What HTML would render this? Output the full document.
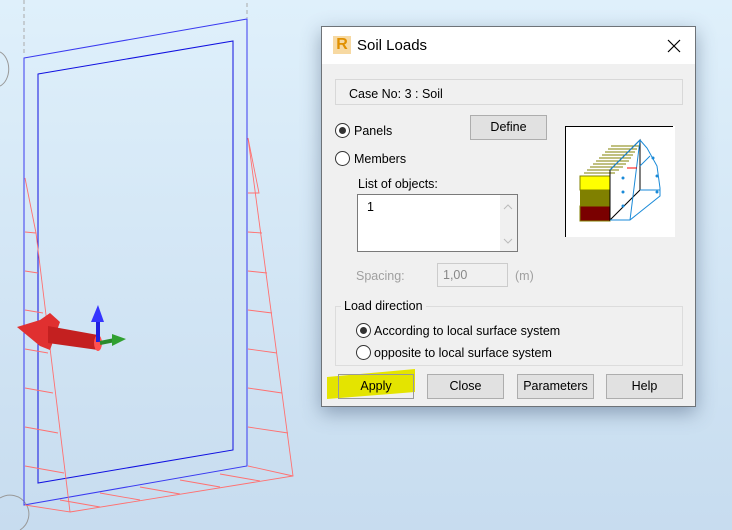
<!DOCTYPE html>
<html><head><meta charset="utf-8"><style>
*{margin:0;padding:0;box-sizing:border-box}
body{width:732px;height:530px;overflow:hidden;position:relative;background:linear-gradient(#dff0fb,#c7dcef);font-family:"Liberation Sans",sans-serif;font-size:12.5px;color:#000}
.a{position:absolute}
#dlg{left:321px;top:26px;width:375px;height:381px;background:#f0f0f0;border:1px solid #6e7378;box-shadow:0 6px 18px rgba(60,80,110,.45)}
#tb{left:0;top:0;width:373px;height:37px;background:#fff}
.btn{position:absolute;height:25px;background:#e1e1e1;border:1px solid #adadad;text-align:center;line-height:23px;font-size:12.5px}
.rad{position:absolute;width:15px;height:15px;border-radius:50%;border:1px solid #333;background:#fff}
.rad.on::after{content:"";position:absolute;left:3px;top:3px;width:7px;height:7px;border-radius:50%;background:#333}
</style></head><body>
<svg class="a" style="left:0;top:0" width="320" height="530">
<line x1="24" y1="0" x2="24" y2="55" stroke="#aaa" stroke-dasharray="4,3"/>
<line x1="247" y1="3" x2="247" y2="18" stroke="#aaa" stroke-dasharray="4,3"/>
<path d="M0 52 A13 18 0 0 1 0 86" fill="none" stroke="#999"/>
<path d="M0 498 A18 18 0 0 1 20 530" fill="none" stroke="#999"/>
<polygon points="24,58 247,19 247,466 24,505" fill="none" stroke="#3a3af0"/>
<polygon points="38,74 233,41 233,450 38,483" fill="none" stroke="#1010e0"/>
<g fill="none" stroke="#ff7070" stroke-width="0.9">
<polyline points="25,178 36,233 70,512 25,505"/>
<polyline points="248,138 293,476 70,512"/>
<polyline points="248,138 259,193 248,193"/>
<line x1="25" y1="232" x2="36" y2="233"/>
<line x1="25" y1="271" x2="38" y2="273"/><line x1="25" y1="310" x2="43" y2="313"/>
<line x1="25" y1="349" x2="48" y2="353"/><line x1="25" y1="388" x2="53" y2="393"/>
<line x1="25" y1="427" x2="58" y2="433"/><line x1="25" y1="466" x2="64" y2="473"/>
<line x1="248" y1="232" x2="262" y2="233"/><line x1="248" y1="271" x2="267" y2="273"/>
<line x1="248" y1="310" x2="272" y2="313"/><line x1="248" y1="349" x2="277" y2="353"/>
<line x1="248" y1="388" x2="282" y2="393"/><line x1="248" y1="427" x2="288" y2="433"/>
<line x1="248" y1="466" x2="293" y2="476"/>
<line x1="60" y1="500" x2="100" y2="507"/><line x1="100" y1="493" x2="140" y2="500"/><line x1="140" y1="487" x2="180" y2="494"/><line x1="180" y1="480" x2="220" y2="487"/><line x1="220" y1="474" x2="260" y2="481"/>
</g>
<polygon points="17,327 40,320 50,313 60,322 50,350 40,346" fill="#e03030"/>
<polygon points="48,326 98,335 98,350 48,343" fill="#c42020"/>
<ellipse cx="98" cy="343" rx="4" ry="8" fill="#ff5050"/>
<rect x="96" y="320" width="4" height="22" fill="#2020e0"/>
<polygon points="91,322 98,305 104,322" fill="#3535ff"/>
<line x1="100" y1="343" x2="115" y2="340" stroke="#2a8a2a" stroke-width="4"/>
<polygon points="112,334 126,339 112,346" fill="#30a030"/>
</svg>
<div id="dlg" class="a">
<div id="tb" class="a">
<div class="a" style="left:11px;top:9px;width:18px;height:18px;background:#f7d9a2;color:#e09000;font-weight:bold;font-size:16px;line-height:18px;text-align:center">R</div>
<div class="a" style="left:35px;top:10px;font-size:15px">Soil Loads</div>
<svg class="a" style="left:345px;top:12px" width="14" height="14"><path d="M1 1L13 13M13 1L1 13" stroke="#000" stroke-width="1.2"/></svg>
</div>
<div class="a" style="left:13px;top:52px;width:348px;height:26px;border:1px solid #d8d8d8;padding:7px 13px">Case No: 3 : Soil</div>
<div class="rad on" style="left:13px;top:96px"></div><div class="a" style="left:32px;top:97px">Panels</div>
<div class="rad" style="left:13px;top:124px"></div><div class="a" style="left:32px;top:125px">Members</div>
<div class="btn" style="left:148px;top:88px;width:77px">Define</div>
<svg class="a" style="left:243px;top:99px" width="110" height="111">
<rect x="0" y="0" width="110" height="111" fill="#fff"/>
<path d="M0.5 111V0.5H108" stroke="#000" fill="none"/>
<g stroke="#808000" stroke-width="1">
<line x1="46" y1="20" x2="74" y2="20"/><line x1="43" y1="23" x2="72" y2="23"/><line x1="40" y1="26" x2="70" y2="26"/><line x1="37" y1="29" x2="68" y2="29"/><line x1="34" y1="32" x2="66" y2="32"/><line x1="31" y1="35" x2="64" y2="35"/><line x1="28" y1="38" x2="61" y2="38"/><line x1="25" y1="41" x2="58" y2="41"/><line x1="22" y1="44" x2="54" y2="44"/><line x1="19" y1="47" x2="50" y2="47"/>
</g>
<rect x="15" y="50" width="30" height="14" fill="#ff0" stroke="#808000"/>
<rect x="15" y="64" width="30" height="16" fill="#808000"/>
<rect x="15" y="80" width="30" height="15" fill="#7a0000" stroke="#808000"/>
<polygon points="45,44 75,14 75,64 45,94" fill="none" stroke="#000"/>
<g fill="none" stroke="#1a8ad8"><polyline points="45,44 75,14 82,22 92,40 95,62 95,70 65,94 45,94"/><polyline points="75,64 95,64"/><line x1="75" y1="14" x2="65" y2="94"/><line x1="85" y1="30" x2="75" y2="40"/></g>
<g fill="#1a8ad8"><circle cx="58" cy="52" r="1.5"/><circle cx="58" cy="66" r="1.5"/><circle cx="58" cy="80" r="1.5"/><circle cx="88" cy="32" r="1.5"/><circle cx="92" cy="50" r="1.5"/><circle cx="92" cy="66" r="1.5"/></g>
<line x1="62" y1="42" x2="72" y2="42" stroke="red"/>
</svg>
<div class="a" style="left:36px;top:150px">List of objects:</div>
<div class="a" style="left:35px;top:167px;width:161px;height:58px;background:#fff;border:1px solid #7a7a7a">
<div class="a" style="left:9px;top:5px">1</div>
<div class="a" style="right:0;top:0;width:17px;height:56px;background:#f0f0f0"></div>
<svg class="a" style="right:4px;top:8px" width="10" height="42"><path d="M1 6L5 2L9 6M1 36L5 40L9 36" fill="none" stroke="#bbb"/></svg>
</div>
<div class="a" style="left:34px;top:242px;color:#a0a0a0">Spacing:</div>
<div class="a" style="left:115px;top:236px;width:71px;height:24px;border:1px solid #ccc;color:#888;padding:4px 5px">1,00</div>
<div class="a" style="left:193px;top:242px;color:#a0a0a0">(m)</div>
<div class="a" style="left:13px;top:279px;width:348px;height:60px;border:1px solid #dcdcdc"></div>
<div class="a" style="left:19px;top:272px;background:#f0f0f0;padding:0 3px">Load direction</div>
<div class="rad on" style="left:34px;top:296px"></div><div class="a" style="left:52px;top:297px">According to local surface system</div>
<div class="rad" style="left:34px;top:318px"></div><div class="a" style="left:52px;top:319px">opposite to local surface system</div>
<svg class="a" style="left:5px;top:342px" width="95" height="32"><polygon points="0,8 88,0 88,23 0,30" fill="#e4e400"/></svg>
<div class="btn" style="left:16px;top:347px;width:76px;background:transparent;border-color:#999">Apply</div>
<div class="btn" style="left:105px;top:347px;width:77px">Close</div>
<div class="btn" style="left:195px;top:347px;width:77px">Parameters</div>
<div class="btn" style="left:284px;top:347px;width:77px">Help</div>
</div>
</body></html>
